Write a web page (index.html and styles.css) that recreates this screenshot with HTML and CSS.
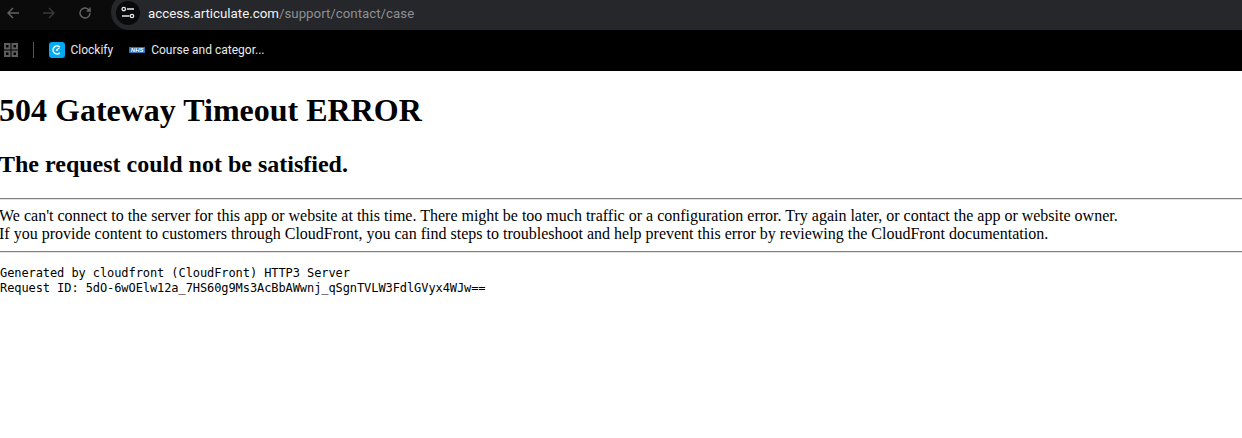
FILE: index.html
```html
<!DOCTYPE html>
<html lang="en">
<head>
<meta charset="utf-8">
<title>504 Gateway Timeout ERROR</title>
<link rel="stylesheet" href="styles.css">
</head>
<body>
<div class="toolbar">
  <div class="nav">
    <svg class="nav-icon" viewBox="0 0 16 16"><path d="M14 8H3M8 3L3 8l5 5" class="stroke-back"/></svg>
    <svg class="nav-icon" viewBox="0 0 16 16"><path d="M2 8h11M8 3l5 5-5 5" class="stroke-fwd"/></svg>
    <svg class="nav-icon" viewBox="0 0 16 16"><path d="M13 8a5 5 0 1 1-1.5-3.6L13 6V2.5M13 6H9.6" class="stroke-back"/></svg>
  </div>
  <div class="omnibox">
    <span class="tune">
      <svg viewBox="0 0 14 14" class="tune-icon"><circle cx="2.8" cy="3" r="1.7"/><path d="M6 3h7M1 10h7.5"/><circle cx="11" cy="10" r="1.7"/></svg>
    </span>
    <span class="url"><span class="host">access.articulate.com</span>/support/contact/case</span>
  </div>
</div>
<div class="bookmarks">
  <svg class="apps" viewBox="0 0 14 14"><rect x="1" y="1" width="4.5" height="4.5"/><rect x="8.5" y="1" width="4.5" height="4.5"/><rect x="1" y="8.5" width="4.5" height="4.5"/><rect x="8.5" y="8.5" width="4.5" height="4.5"/></svg>
  <span class="sep"></span>
  <span class="bm clockify">
    <svg class="clock-icon" viewBox="0 0 16 16"><rect width="16" height="16" rx="3" fill="#03a9f4"/><path d="M10.8 5.1A4 4 0 1 0 10.8 10.9" fill="none" stroke="#fff" stroke-width="1.5"/><path d="M7.6 8l2.8-2" stroke="#fff" stroke-width="1.3"/><circle cx="8" cy="8" r="1" fill="#fff"/></svg>
    Clockify
  </span>
  <span class="bm nhs">
    <span class="nhs-logo">NHS</span>
    Course and categor...
  </span>
</div>
<main class="page">
  <h1>504 Gateway Timeout ERROR</h1>
  <h2>The request could not be satisfied.</h2>
  <hr>
  <p>We can't connect to the server for this app or website at this time. There might be too much traffic or a configuration error. Try again later, or contact the app or website owner.<br>If you provide content to customers through CloudFront, you can find steps to troubleshoot and help prevent this error by reviewing the CloudFront documentation.</p>
  <hr>
  <pre>Generated by cloudfront (CloudFront) HTTP3 Server
Request ID: 5dO-6wOElw12a_7HS60g9Ms3AcBbAWwnj_qSgnTVLW3FdlGVyx4WJw==</pre>
</main>
</body>
</html>
```
FILE: styles.css
```css
html, body { margin: 0; padding: 0; background: #fff; overflow: hidden; }
body { height: 438px; }
.toolbar { height: 30px; background: #0b0b0b; display: flex; align-items: flex-end; overflow: hidden; }
.nav { display: flex; align-items: center; gap: 20px; padding: 0 0 4px 5px; width: 111px; box-sizing: border-box; height: 30px; flex: none; }
.nav-icon { width: 16px; height: 16px; flex: none; }
.nav-icon path { fill: none; stroke-width: 1.4; }
.stroke-back { stroke: #636363; }
.stroke-fwd { stroke: #3a3a3a; }
.omnibox { flex: 1; height: 36px; flex-shrink: 0; display: flex; align-items: center; padding-top: 2px; box-sizing: border-box; background: #25272b; border-radius: 18px 0 0 18px; }
.tune { width: 24px; height: 24px; border-radius: 50%; background: #090a0b; margin-left: 5px; display: flex; align-items: center; justify-content: center; flex: none; }
.tune-icon { width: 14px; height: 14px; fill: none; stroke: #e8e8e8; stroke-width: 1.3; }
.url { margin-left: 8px; font: 13.3px "Roboto", "Liberation Sans", sans-serif; color: #8d8f93; }
.host { color: #f1f3f4; }
.bookmarks { height: 41px; background: #000; display: flex; align-items: center; padding: 0 0 2px 4px; box-sizing: border-box; color: #e8eaed; font: 12px "Roboto", "Liberation Sans", sans-serif; }
.apps { width: 14px; height: 14px; fill: none; stroke: #5e5e5e; stroke-width: 2; flex: none; }
.sep { width: 1.5px; height: 16px; background: #555; margin: 0 14.5px 0 14.5px; }
.bm { display: inline-flex; align-items: center; gap: 6px; }
.clock-icon { width: 16px; height: 16px; }
.nhs { margin-left: 16px; }
.nhs-logo { background: #2f6fb8; color: #fff; font: italic 700 6px "Liberation Sans", sans-serif; width: 16px; height: 6px; line-height: 6px; text-align: center; }
.page { font-family: "Liberation Serif", serif; color: #000; font-size: 16px; }
h1, h2, p, pre { margin-left: -1px; }
h1 { font-size: 32px; font-weight: 700; margin-top: 21px; margin-bottom: 22px; line-height: 37px; }
h2 { font-size: 24px; font-weight: 700; margin-top: 21px; margin-bottom: 20px; line-height: 27px; }
hr { margin: 8px 0 7px; border: 0; border-top: 1px solid #808080; border-bottom: 1px solid #e4e4e4; height: 0; }
p { margin-top: 7px; margin-bottom: 8px; line-height: 18px; }
pre { font: 12px/15px "DejaVu Sans Mono", monospace; letter-spacing: -0.085px; margin-top: 13px; margin-bottom: 13px; margin-left: 0; }
```
